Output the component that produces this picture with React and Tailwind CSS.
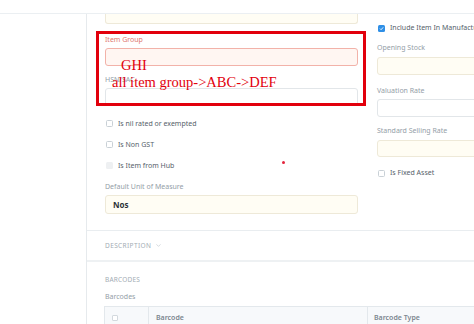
import { ChevronDown } from "lucide-react";

const font = { fontFamily: '"Noto Sans", "Open Sans", sans-serif' };

function Label({ children, className = "" }) {
  return <div className={`h-[10px] leading-[10px] text-[7px] text-[#949ea7] whitespace-nowrap ${className}`}>{children}</div>;
}

function Check({ label, checked, disabled, className = "" }) {
  return (
    <div className={`h-[21px] flex items-center ${className}`}>
      <span className={`w-[7px] h-[7px] rounded-[1.5px] ml-px flex items-center justify-center ${checked ? "bg-[#2f8fe6]" : disabled ? "bg-[#eef0f2]" : "border border-[#c9d0d6] bg-white"}`}>
        {checked && (
          <svg width="5" height="5" viewBox="0 0 10 10"><path d="M2 5.2 4.2 7.4 8.2 2.8" fill="none" stroke="#fff" strokeWidth="1.8" /></svg>
        )}
      </span>
      <span className="ml-[5px] text-[7px] leading-[10px] text-[#56616a] whitespace-nowrap">{label}</span>
    </div>
  );
}

export default function App() {
  return (
    <div className="relative w-[474px] h-[324px] overflow-hidden bg-white" style={font}>
      <div className="h-[14px] border-b border-[#ebeff2]" />
      <div className="flex">
        <div className="w-[87px] shrink-0 h-[310px] border-r border-[#e6eaed]" />
        <div className="flex-1 min-w-0 overflow-hidden">
          {/* main fields */}
          <div className="h-[217px] border-b border-[#e9edf0] pl-[18px] flex gap-[19px]">
            <div className="w-[253px] shrink-0">
              <div className="h-[10px] border-x border-b border-[#eee9d8] bg-[#fffdf4] rounded-b-[3px]" />
              <Label className="mt-[11px] !text-[#e0776e]">Item Group</Label>
              <div className="mt-[3px] h-[18px] rounded-[3px] border border-[#f2b2a9] bg-[#fff6f2]" />
              <Label className="mt-[9px]">HSN/SAC</Label>
              <div className="mt-[3px] h-[18px] rounded-[3px] border border-[#e2e6e9] bg-white" />
              <div className="mt-[7px]">
                <Check label="Is nil rated or exempted" />
                <Check label="Is Non GST" />
                <Check label="Is Item from Hub" disabled />
              </div>
              <Label className="mt-[6px]">Default Unit of Measure</Label>
              <div className="mt-[3px] h-[19px] rounded-[3px] border border-[#eee9d8] bg-[#fffdf4] flex items-center pl-[7px]">
                <span className="text-[8px] font-bold text-[#2c3338]">Nos</span>
              </div>
            </div>
            <div className="w-[253px] shrink-0">
              <Check label="Include Item In Manufacturing" checked className="mt-[4px] !h-[20px]" />
              <Label className="mt-[5px]">Opening Stock</Label>
              <div className="mt-[4px] h-[18px] rounded-[3px] border border-[#eee9d8] bg-[#fffdf4]" />
              <Label className="mt-[11px]">Valuation Rate</Label>
              <div className="mt-[3px] h-[18px] rounded-[3px] border border-[#e2e6e9] bg-white" />
              <Label className="mt-[9px]">Standard Selling Rate</Label>
              <div className="mt-[4px] h-[17px] rounded-[3px] border border-[#eee9d8] bg-[#fffdf4]" />
              <Check label="Is Fixed Asset" className="mt-[6px] !h-[20px]" />
            </div>
          </div>

          {/* description */}
          <div className="h-[31px] border-b-2 border-[#eef1f3] pl-[18px] flex items-center">
            <span className="text-[6.5px] tracking-[0.06em] text-[#a3acb4]">DESCRIPTION</span>
            <ChevronDown className="ml-[4px] w-[7px] h-[7px] text-[#b9c1c8]" strokeWidth={2} />
          </div>

          {/* barcodes */}
          <div className="pl-[17px]">
            <div className="mt-[13px] ml-px h-[10px] leading-[10px] text-[6.5px] tracking-[0.03em] text-[#a3acb4]">BARCODES</div>
            <Label className="mt-[7px] ml-px">Barcodes</Label>
            <div className="mt-[4px] flex h-[24px] w-[420px] border-t border-l border-[#e3e8ec] bg-[#f7f9fb]">
              <div className="w-[44px] shrink-0 border-r border-[#e3e8ec] pl-[7px] pt-[8px]">
                <span className="block w-[6px] h-[6px] border border-[#d3d9de] rounded-[1px] bg-white" />
              </div>
              <div className="w-[219px] shrink-0 border-r border-[#e3e8ec] pl-[7px] pt-[6px] text-[7px] font-semibold text-[#7c868f]">Barcode</div>
              <div className="pl-[6px] pt-[6px] text-[7px] font-semibold text-[#7c868f] whitespace-nowrap">Barcode Type</div>
            </div>
          </div>
        </div>
      </div>

      {/* annotation overlay */}
      <div className="absolute left-[96px] top-[31px] w-[270px] h-[75px] border-[3px] border-[#e2000c]" />
      <div className="absolute left-[121px] top-[58px] text-[14.5px] leading-none text-[#e2000c] whitespace-nowrap" style={{ fontFamily: '"Liberation Serif", serif' }}>GHI</div>
      <div className="absolute left-[112px] top-[75px] text-[14.5px] leading-none text-[#e2000c] whitespace-nowrap" style={{ fontFamily: '"Liberation Serif", serif' }}>all item group-&gt;ABC-&gt;DEF</div>
      <div className="absolute left-[282px] top-[161px] w-[3px] h-[3px] rounded-full bg-[#e3243c]" />
    </div>
  );
}
